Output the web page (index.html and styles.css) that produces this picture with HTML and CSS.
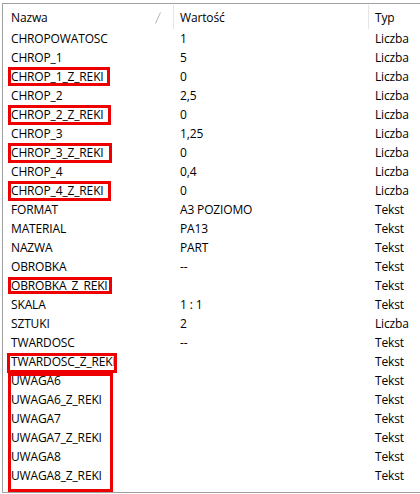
FILE: index.html
```html
<!DOCTYPE html>
<html lang="pl">
<head>
<meta charset="utf-8">
<link rel="stylesheet" href="styles.css">
</head>
<body>
<div class="panel">
  <div class="header">
    <div class="hcell c-name">Nazwa
      <svg class="sort" width="6" height="12" viewBox="0 0 6 12"><line x1="0.5" y1="11.5" x2="5.5" y2="0.5" stroke="#b4b4b4" stroke-width="1"/></svg>
    </div>
    <div class="hcell c-val sep">Wartość</div>
    <div class="hcell c-type sep">Typ</div>
  </div>
  <div class="rows">
    <div class="row"><span class="c-name">CHROPOWATOSC</span><span class="c-val">1</span><span class="c-type">Liczba</span></div>
    <div class="row"><span class="c-name">CHROP_1</span><span class="c-val">5</span><span class="c-type">Liczba</span></div>
    <div class="row"><span class="c-name">CHROP_1_Z_REKI</span><span class="c-val">0</span><span class="c-type">Liczba</span></div>
    <div class="row"><span class="c-name">CHROP_2</span><span class="c-val">2,5</span><span class="c-type">Liczba</span></div>
    <div class="row"><span class="c-name">CHROP_2_Z_REKI</span><span class="c-val">0</span><span class="c-type">Liczba</span></div>
    <div class="row"><span class="c-name">CHROP_3</span><span class="c-val">1,25</span><span class="c-type">Liczba</span></div>
    <div class="row"><span class="c-name">CHROP_3_Z_REKI</span><span class="c-val">0</span><span class="c-type">Liczba</span></div>
    <div class="row"><span class="c-name">CHROP_4</span><span class="c-val">0,4</span><span class="c-type">Liczba</span></div>
    <div class="row"><span class="c-name">CHROP_4_Z_REKI</span><span class="c-val">0</span><span class="c-type">Liczba</span></div>
    <div class="row"><span class="c-name">FORMAT</span><span class="c-val">A3 POZIOMO</span><span class="c-type">Tekst</span></div>
    <div class="row"><span class="c-name">MATERIAL</span><span class="c-val">PA13</span><span class="c-type">Tekst</span></div>
    <div class="row"><span class="c-name">NAZWA</span><span class="c-val">PART</span><span class="c-type">Tekst</span></div>
    <div class="row"><span class="c-name">OBROBKA</span><span class="c-val">--</span><span class="c-type">Tekst</span></div>
    <div class="row"><span class="c-name">OBROBKA_Z_REKI</span><span class="c-val"></span><span class="c-type">Tekst</span></div>
    <div class="row"><span class="c-name">SKALA</span><span class="c-val">1 : 1</span><span class="c-type">Tekst</span></div>
    <div class="row"><span class="c-name">SZTUKI</span><span class="c-val">2</span><span class="c-type">Liczba</span></div>
    <div class="row"><span class="c-name">TWARDOSC</span><span class="c-val">--</span><span class="c-type">Tekst</span></div>
    <div class="row"><span class="c-name">TWARDOSC_Z_REKI</span><span class="c-val"></span><span class="c-type">Tekst</span></div>
    <div class="row"><span class="c-name">UWAGA6</span><span class="c-val"></span><span class="c-type">Tekst</span></div>
    <div class="row"><span class="c-name">UWAGA6_Z_REKI</span><span class="c-val"></span><span class="c-type">Tekst</span></div>
    <div class="row"><span class="c-name">UWAGA7</span><span class="c-val"></span><span class="c-type">Tekst</span></div>
    <div class="row"><span class="c-name">UWAGA7_Z_REKI</span><span class="c-val"></span><span class="c-type">Tekst</span></div>
    <div class="row"><span class="c-name">UWAGA8</span><span class="c-val"></span><span class="c-type">Tekst</span></div>
    <div class="row"><span class="c-name">UWAGA8_Z_REKI</span><span class="c-val"></span><span class="c-type">Tekst</span></div>
  </div>
</div>
<div class="mark m1"></div>
<div class="mark m2"></div>
<div class="mark m3"></div>
<div class="mark m4"></div>
<div class="mark m5"></div>
<div class="mark m6"></div>
<div class="mark m7"></div>
</body>
</html>
```
FILE: styles.css
```css
html, body {
  margin: 0;
  padding: 0;
  background: #ffffff;
  overflow: hidden;
  width: 420px;
  height: 494px;
}
body {
  font-family: "Open Sans", "Noto Sans", sans-serif;
  font-size: 12px;
  letter-spacing: -0.15px;
  color: #000000;
  position: relative;
}
.panel {
  margin: 3px 0 0 2px;
  width: 417px;
  height: 488px;
  border: 1px solid #a0a0a0;
  border-right: none;
  box-sizing: content-box;
  background: #ffffff;
  overflow: hidden;
}
.header {
  display: grid;
  grid-template-columns: 170px 195px 1fr;
  height: 25px;
}
.hcell {
  display: flex;
  align-items: center;
  height: 24px;
  margin-top: 1px;
  position: relative;
}
.c-name { padding-left: 8px; }
.c-val { padding-left: 7px; }
.c-type { padding-left: 6px; }
.sep { border-left: 1px solid #e5e5e5; }
.hcell.c-val { padding-left: 6px; }
.hcell.c-type { padding-left: 6px; }
.sort {
  position: absolute;
  left: 152px;
  top: 7px;
}
.rows {
  display: flex;
  flex-direction: column;
}
.row {
  display: grid;
  grid-template-columns: 170px 195px 1fr;
  height: 19px;
  line-height: 19px;
  white-space: nowrap;
}
.row .c-val { padding-left: 7px; }
.row .c-type { padding-left: 7px; }
.mark {
  position: absolute;
  border: 3px solid #ee0000;
  box-sizing: border-box;
}
.m1 { left: 8px; top: 67px; width: 102px; height: 19px; }
.m2 { left: 8px; top: 105px; width: 103px; height: 20px; }
.m3 { left: 8px; top: 143px; width: 104px; height: 20px; }
.m4 { left: 8px; top: 181px; width: 103px; height: 20px; }
.m5 { left: 8px; top: 277px; width: 104px; height: 17px; }
.m6 { left: 7px; top: 353px; width: 110px; height: 20px; }
.m7 { left: 8px; top: 373px; width: 105px; height: 119px; }
```
